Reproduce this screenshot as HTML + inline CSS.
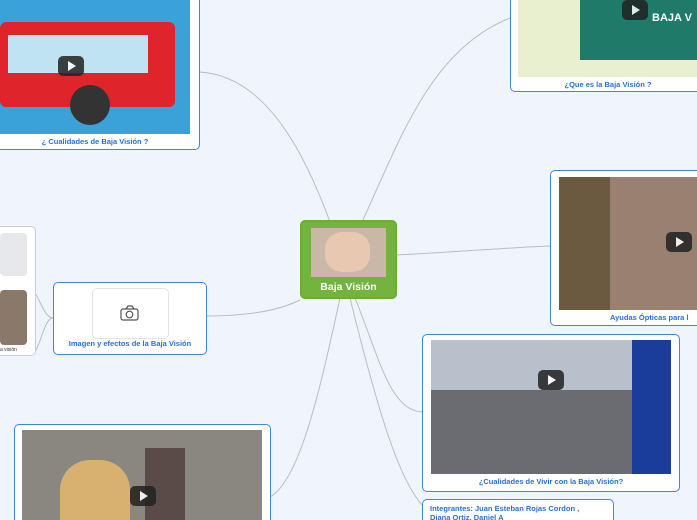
<!DOCTYPE html>
<html style="overflow:hidden;height:520px"><head><meta charset="utf-8"><style>
body{margin:0;width:697px;height:520px;background:#f0f4fd;position:relative;overflow:hidden;font-family:"Liberation Sans",sans-serif}
.n{position:absolute;border:1.5px solid #3d86e6;border-radius:5px;background:#fff;box-sizing:border-box}
.im{position:absolute}
.cap{position:absolute;font-size:7.5px;font-weight:bold;color:#2a6fd6;white-space:nowrap;text-align:center}
.play{position:absolute;width:26px;height:20px;background:#222;border-radius:5px;opacity:.85}
.play:after{content:"";position:absolute;left:10px;top:5px;border-left:8px solid #fff;border-top:5px solid transparent;border-bottom:5px solid transparent}
</style></head><body>
<svg width="697" height="520" style="position:absolute;left:0;top:0" fill="none" stroke="#b8bcc6" stroke-width="1">
<path d="M330 222 C300 140 260 75 199 72"/>
<path d="M362 222 C400 140 430 50 510 18"/>
<path d="M396 255 C460 252 500 248 550 246"/>
<path d="M300 300 C280 310 250 316 206 316"/>
<path d="M355 298 C380 360 390 410 422 412"/>
<path d="M340 298 C320 390 300 480 270 497"/>
<path d="M350 298 C380 420 400 480 422 505"/>
<path d="M53 318 C45 318 40 300 35 293"/>
<path d="M53 318 C45 318 42 340 35 352"/>
</svg>
<div class="n" style="left:-4px;top:-4px;width:204px;height:154px"></div>
<div class="im" style="left:0;top:0;width:190px;height:134px;background:#3aa2d8"></div>
<div class="im" style="left:0;top:22px;width:175px;height:85px;background:#e0242b;border-radius:6px"></div>
<div class="im" style="left:8px;top:35px;width:140px;height:38px;background:#bfe3f2"></div>
<div class="im" style="left:70px;top:85px;width:40px;height:40px;background:#333;border-radius:50%"></div>
<div class="play" style="left:58px;top:56px"></div>
<div class="cap" style="left:0;top:137px;width:190px">¿ Cualidades de Baja Visión ?</div>
<div class="n" style="left:510px;top:-4px;width:192px;height:96px"></div>
<div class="im" style="left:518px;top:0;width:180px;height:77px;background:#e8f0d0"></div>
<div class="im" style="left:580px;top:0;width:118px;height:60px;background:#1f7a6a"></div>
<div class="im" style="left:652px;top:12px;color:#fff;font-size:11px;font-weight:bold">BAJA V</div>
<div class="play" style="left:622px;top:0"></div>
<div class="cap" style="left:518px;top:80px;width:180px">¿Que es la Baja Visión ?</div>
<div class="n" style="left:550px;top:170px;width:152px;height:156px"></div>
<div class="im" style="left:559px;top:177px;width:140px;height:133px;background:#6b5a40"></div>
<div class="im" style="left:610px;top:177px;width:88px;height:133px;background:#9a8070"></div>
<div class="play" style="left:666px;top:232px"></div>
<div class="cap" style="left:610px;top:313px">Ayudas Ópticas para l</div>
<div class="n" style="left:300px;top:220px;width:97px;height:79px;background:#72b43e;border:2px solid #6aae36"></div>
<div class="im" style="left:311px;top:228px;width:75px;height:49px;background:#c9b8a8"></div>
<div class="im" style="left:325px;top:232px;width:45px;height:40px;background:#e8c8b0;border-radius:40%"></div>
<div class="cap" style="left:300px;top:281px;width:97px;color:#fff;font-size:10.5px">Baja Visión</div>
<div class="n" style="left:53px;top:282px;width:154px;height:73px"></div>
<div class="im" style="left:92px;top:288px;width:75px;height:49px;border:1px solid #e2e4e8;border-radius:5px;background:#fff"></div>
<svg class="im" style="left:120px;top:305px" width="20" height="16" fill="none" stroke="#555" stroke-width="1.2"><rect x="1" y="4" width="17" height="11" rx="2"/><path d="M6 4 L8 1 H12 L14 4"/><circle cx="9.5" cy="9.5" r="3.3"/></svg>
<div class="cap" style="left:53px;top:339px;width:154px">Imagen y efectos de la Baja Visión</div>
<div class="n" style="left:-6px;top:226px;width:42px;height:130px;border:1px solid #c8ccd4"></div>
<div class="im" style="left:0;top:233px;width:27px;height:43px;background:#e6e8ec;border-radius:4px"></div>
<div class="im" style="left:0;top:290px;width:27px;height:55px;background:#8a7868;border-radius:4px"></div>
<div class="im" style="left:0;top:347px;font-size:5px;color:#333">a visión</div>
<div class="n" style="left:422px;top:334px;width:258px;height:158px"></div>
<div class="im" style="left:431px;top:340px;width:240px;height:134px;background:#6a6c72"></div>
<div class="im" style="left:431px;top:340px;width:240px;height:50px;background:#b8c0cc"></div>
<div class="im" style="left:632px;top:340px;width:39px;height:134px;background:#1a3c9a"></div>
<div class="play" style="left:538px;top:370px"></div>
<div class="cap" style="left:422px;top:477px;width:258px">¿Cualidades de Vivir con la Baja Visión?</div>
<div class="n" style="left:422px;top:499px;width:192px;height:21px;border-bottom:none;border-radius:5px 5px 0 0"></div>
<div class="cap" style="left:430px;top:504px;text-align:left;line-height:9px">Integrantes: Juan Esteban Rojas Cordon ,<br>Diana Ortiz, Daniel A</div>
<div class="n" style="left:14px;top:424px;width:257px;height:96px;border-bottom:none;border-radius:5px 5px 0 0"></div>
<div class="im" style="left:22px;top:430px;width:240px;height:90px;background:#8a8680"></div>
<div class="im" style="left:60px;top:460px;width:70px;height:60px;background:#d8b070;border-radius:30px 30px 0 0"></div>
<div class="im" style="left:145px;top:448px;width:40px;height:72px;background:#5a4a48"></div>
<div class="play" style="left:130px;top:486px"></div>
</body></html>
